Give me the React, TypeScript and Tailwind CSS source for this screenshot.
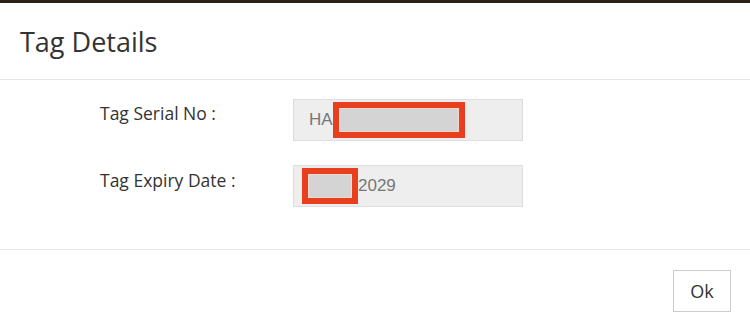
export default function App() {
  return (
    <div className="w-full h-[331px] bg-white font-['Open_Sans',sans-serif] text-[#333] overflow-hidden">
      <div className="h-[3px] bg-[#2b2119]" />
      <div className="h-[77px] flex items-center px-5 border-b border-[#e6e6e6]">
        <h1 className="text-[27px] font-normal leading-none">Tag Details</h1>
      </div>

      <div className="pt-[19px] pb-[42px] flex flex-col gap-[24px]">
        <div className="flex">
          <div className="w-[293px] pl-[100px] pt-[2px] text-[17.5px] leading-[24px]">Tag Serial No :</div>
          <div className="w-[230px] h-[42px] bg-[#eeeeee] border border-[#dddddd] flex items-center pl-[15px] font-['Liberation_Sans',Arial,sans-serif] text-[17px] text-[#777]">
            <span>HA</span>
            <span className="w-[132px] h-[36px] border-[6px] border-[#e8401f] bg-[#d4d4d4] outline outline-1 outline-[#f2d8d0] -outline-offset-[7px]" />
          </div>
        </div>
        <div className="flex">
          <div className="w-[293px] pl-[100px] pt-[3px] text-[17.5px] leading-[24px]">Tag Expiry Date :</div>
          <div className="w-[230px] h-[42px] bg-[#eeeeee] border border-[#dddddd] flex items-center pl-[8px] font-['Liberation_Sans',Arial,sans-serif] text-[17px] text-[#777]">
            <span className="w-[56px] h-[36px] border-[6px] border-[#e8401f] bg-[#d4d4d4] outline outline-1 outline-[#f2d8d0] -outline-offset-[7px]" />
            <span>2029</span>
          </div>
        </div>
      </div>

      <div className="border-t border-[#e6e6e6] flex justify-end pt-[20px] pr-[19px]">
        <button className="w-[58px] h-[42px] border border-[#cccccc] bg-white text-[18px] text-[#333]">Ok</button>
      </div>
    </div>
  );
}
